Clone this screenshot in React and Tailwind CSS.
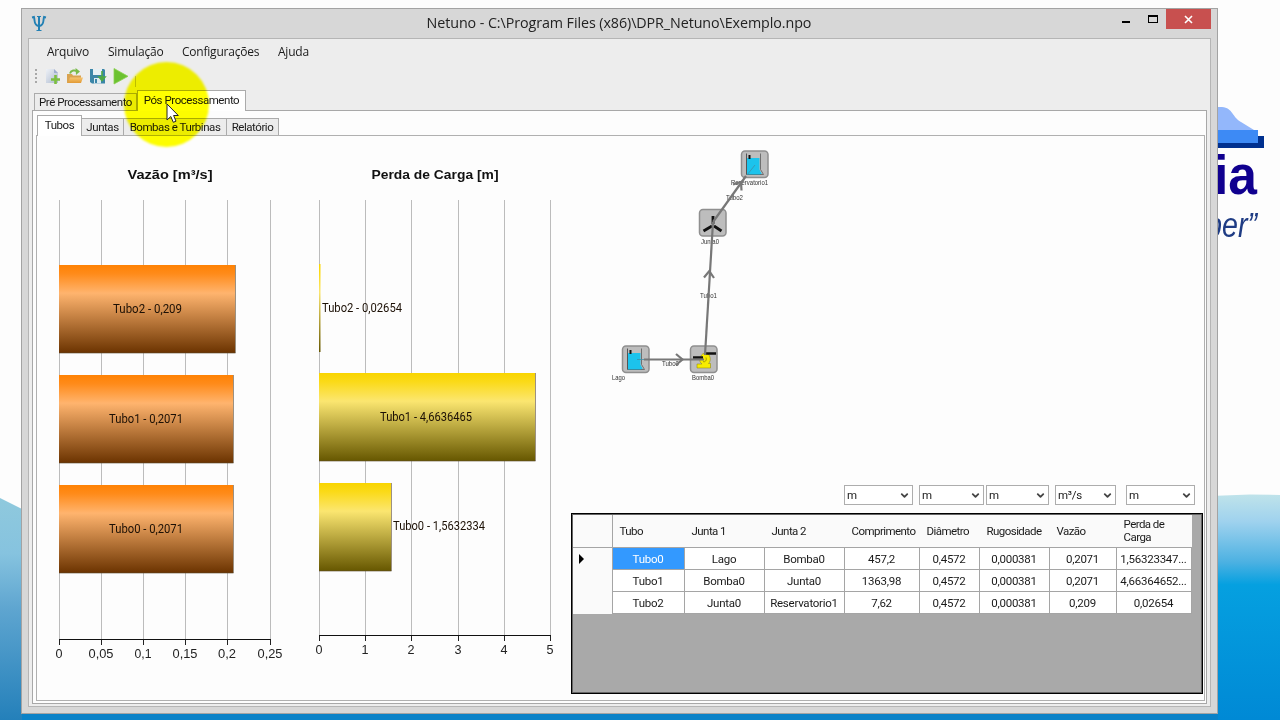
import { ChevronDown } from "lucide-react";

const menus = [
    { label: "Arquivo", width: "w-[61px]" },
    { label: "Simulação", width: "w-[74px]" },
    { label: "Configurações", width: "w-[96px]" },
    { label: "Ajuda", width: "w-[50px]" },
];

const flowChart = {
    title: "Vazão [m³/s]",
    titleX: 170,
    titleLength: 85,
    left: 37,
    width: 260,
    axisY: 639,
    labelY: 658,
    gradient: "orangeBar",
    ticks: [
        { x: 59, label: "0", length: 7 },
        { x: 101, label: "0,05", length: 25 },
        { x: 143, label: "0,1", length: 17 },
        { x: 185, label: "0,15", length: 25 },
        { x: 227, label: "0,2", length: 18 },
        { x: 270, label: "0,25", length: 25 },
    ],
    bars: [
        { y: 265, width: 176, label: "Tubo2 - 0,209", labelX: 113, length: 69, labelY: 313 },
        { y: 375, width: 174, label: "Tubo1 - 0,2071", labelX: 109, length: 74, labelY: 423 },
        { y: 485, width: 174, label: "Tubo0 - 0,2071", labelX: 109, length: 74, labelY: 533 },
    ],
};

const lossChart = {
    title: "Perda de Carga [m]",
    titleX: 435,
    titleLength: 127,
    left: 297,
    width: 274,
    axisY: 635,
    labelY: 654,
    gradient: "yellowBar",
    ticks: [
        { x: 319, label: "0", length: 7 },
        { x: 365, label: "1", length: 7 },
        { x: 411, label: "2", length: 7 },
        { x: 458, label: "3", length: 7 },
        { x: 504, label: "4", length: 7 },
        { x: 550, label: "5", length: 7 },
    ],
    bars: [
        { y: 264, width: 1.5, label: "Tubo2 - 0,02654", labelX: 322, length: 80, labelY: 312 },
        { y: 373, width: 216, label: "Tubo1 - 4,6636465", labelX: 380, length: 92, labelY: 421 },
        { y: 483, width: 72, label: "Tubo0 - 1,5632334", labelX: 393, length: 92, labelY: 530 },
    ],
};

const units = [
    { label: "m", style: "w-[69px]" },
    { label: "m", style: "w-[65px] ml-[6px]" },
    { label: "m", style: "w-[63px] ml-[2px]" },
    { label: "m³/s", style: "w-[61px] ml-[6px]" },
    { label: "m", style: "w-[69px] ml-[10px]" },
];

const columns = ["Tubo", "Junta 1", "Junta 2", "Comprimento", "Diâmetro", "Rugosidade", "Vazão", "Perda de Carga"];

const rows = [
    ["Tubo0", "Lago", "Bomba0", "457,2", "0,4572", "0,000381", "0,2071", "1,56323347..."],
    ["Tubo1", "Bomba0", "Junta0", "1363,98", "0,4572", "0,000381", "0,2071", "4,66364652..."],
    ["Tubo2", "Junta0", "Reservatorio1", "7,62", "0,4572", "0,000381", "0,209", "0,02654"],
];

function Wallpaper() {
    return (
        <svg className="absolute inset-0 tracking-normal" width="1280" height="720" viewBox="0 0 1280 720">
            <defs>
                <linearGradient id="waveLeft" x1="0" y1="0" x2="0" y2="1">
                    <stop offset="0" stopColor="#8fc9dd" />
                    <stop offset="0.25" stopColor="#86c3df" />
                    <stop offset="0.5" stopColor="#5ea5d0" />
                    <stop offset="1" stopColor="#2480ba" />
                </linearGradient>
                <linearGradient id="waveRight" x1="0" y1="0" x2="0" y2="1">
                    <stop offset="0" stopColor="#bfe3ea" />
                    <stop offset="0.12" stopColor="#9fd2ee" />
                    <stop offset="0.3" stopColor="#4cb1e2" />
                    <stop offset="0.4" stopColor="#05a0e0" />
                    <stop offset="1" stopColor="#0089d5" />
                </linearGradient>
            </defs>
            <rect width="1280" height="720" fill="#fdfdfd" />
            <path d="M0 498 L24 510 V720 H0Z" fill="url(#waveLeft)" />
            <path d="M1210 496 L1250 494.500 L1280 495 V720 H1210Z" fill="url(#waveRight)" />
            <rect x="22" y="712" width="1196" height="8" fill="#0a82c8" />
            <path d="M1210 136 H1264 V148 H1210Z" fill="#00308f" />
            <path d="M1210 130 H1258 V143 H1210Z" fill="#3d8af5" />
            <path d="M1210 107 H1222 C1233 108 1232 117 1241 122 L1254 130 H1210Z" fill="#93b7fb" />
            <text x="1257" y="194" textAnchor="end" textLength="43" lengthAdjust="spacingAndGlyphs" fontFamily="Liberation Sans, sans-serif" fontSize="55" fontWeight="700" fill="#10008f">ia</text>
            <text x="1257" y="237" textAnchor="end" textLength="51" lengthAdjust="spacingAndGlyphs" fontFamily="Liberation Sans, sans-serif" fontSize="35" fontStyle="italic" fill="#1f3c84">ber”</text>
        </svg>
    );
}

function TitleBar() {
    return (
        <div className="flex h-[29px] shrink-0 items-start">
            <svg className="mt-[6px] ml-[9px]" width="16" height="17" viewBox="0 0 16 17" fill="none" stroke="#2380b4">
                <path d="M8 1 V16" strokeWidth="2" />
                <path d="M1 2.500 L3 2 C4 5 2.500 10.500 8 11 C13.500 10.500 12 5 13 2 L15 2.500" strokeWidth="1.900" />
                <path d="M6 1.500 H10 M5.500 15.500 H10.500" strokeWidth="1.200" />
            </svg>
            <div className="mt-[4px] flex-1 pl-[73px] text-center font-['Open_Sans',sans-serif] text-[14.3px] leading-5 tracking-[-0.08px] whitespace-nowrap text-[#222]">
                Netuno - C:\Program Files (x86)\DPR_Netuno\Exemplo.npo
            </div>
            <div className="mr-[6px] flex h-[21px]">
                <div className="flex w-[29px] items-start pt-[12px] pl-[4px]">
                    <div className="h-[2px] w-[8px] bg-black"></div>
                </div>
                <div className="w-[19px] pt-[6px] pl-px">
                    <div className="h-[8px] w-[10px] border border-t-2 border-black"></div>
                </div>
                <div className="flex h-[20px] w-[45px] items-center justify-center bg-[#c8504f]">
                    <svg width="9" height="9" viewBox="0 0 9 9" stroke="#fff" strokeWidth="1.600">
                        <path d="M1 1 L8 8 M8 1 L1 8" />
                    </svg>
                </div>
            </div>
        </div>
    );
}

function Toolbar() {
    return (
        <div className="flex h-[26px] items-start pt-[2px]">
            <svg width="110" height="22" viewBox="29 66 110 22">
                <defs>
                    <linearGradient id="page" x1="0" y1="0" x2="1" y2="1">
                        <stop offset="0" stopColor="#eef1f6" />
                        <stop offset="1" stopColor="#aebbd0" />
                    </linearGradient>
                    <linearGradient id="folder" x1="0" y1="0" x2="0" y2="1">
                        <stop offset="0" stopColor="#f6c470" />
                        <stop offset="1" stopColor="#e29a35" />
                    </linearGradient>
                </defs>
                <path d="M36 69 V84" stroke="#a8a8a8" strokeWidth="2" strokeDasharray="2 2" />
                <path d="M46 69 H54 L58 73 V83 H46Z" fill="url(#page)" />
                <path d="M54 69 V73 H58Z" fill="#9faed0" />
                <path d="M55.500 75 V84 M51 79.500 H60" stroke="#7cbf40" strokeWidth="2.600" />
                <path d="M67 83 V74 H72 L73 75.500 H81 V83Z" fill="#d9a350" />
                <path d="M68 83 L70 77.500 H83 L81 83Z" fill="url(#folder)" />
                <path d="M70 73.500 C71 70 75 70 77 71" stroke="#79bb4b" strokeWidth="2" fill="none" />
                <path d="M75.500 68 L80 71.500 L76 75Z" fill="#79bb4b" />
                <path d="M90 69 H104 L105 70 V83.500 H92 L90 82Z" fill="#3b86a8" />
                <rect x="93" y="69" width="9" height="6" fill="#e6f0f5" />
                <rect x="94" y="78" width="7" height="5.500" fill="#dceaf0" />
                <rect x="95" y="79" width="2" height="4" fill="#3b86a8" />
                <path d="M102 71 V79 M99 77 L102 80.500 L105 77Z" stroke="#4fa945" strokeWidth="1.600" fill="#4fa945" />
                <path d="M114 68.500 L128 76.300 L114 84Z" fill="#6cc230" stroke="#8ad050" strokeWidth="0.800" />
                <path d="M135.500 76 V87" stroke="#bdbdbd" />
            </svg>
        </div>
    );
}

function Tab({ label, className }) {
    return (
        <div className={`flex justify-center border border-b-0 border-[#ababab] tracking-[-0.45px] whitespace-nowrap ${className}`}>
            {label}
        </div>
    );
}

function Highlight() {
    return (
        <>
            <div className="pointer-events-none absolute top-[62px] left-[124px] z-10 h-[85px] w-[85px] rounded-full bg-[#ffff00] mix-blend-multiply blur-[1px]"></div>
            <svg className="absolute top-[103px] left-[166px] z-20" width="14" height="21" viewBox="0 0 14 21">
                <path d="M1 1 V17 L4.800 13.500 L7.300 19.300 L10 18.200 L7.600 12.500 H12.300Z" fill="#fff" stroke="#222" />
            </svg>
        </>
    );
}

function BarChart({ chart }) {
    const start = chart.ticks[0].x;
    const end = chart.ticks[chart.ticks.length - 1].x;
    return (
        <svg className="shrink-0 tracking-normal" width={chart.width} height="560" viewBox={`${chart.left} 136 ${chart.width} 560`} fontFamily="Roboto, sans-serif">
            <defs>
                <linearGradient id="orangeBar" x1="0" y1="0" x2="0" y2="1">
                    <stop offset="0" stopColor="#ff8204" />
                    <stop offset="0.1" stopColor="#ff8b1a" />
                    <stop offset="0.32" stopColor="#ffb46e" />
                    <stop offset="1" stopColor="#6b3300" />
                </linearGradient>
                <linearGradient id="yellowBar" x1="0" y1="0" x2="0" y2="1">
                    <stop offset="0" stopColor="#f9d500" />
                    <stop offset="0.1" stopColor="#fbda18" />
                    <stop offset="0.32" stopColor="#fbe670" />
                    <stop offset="1" stopColor="#665700" />
                </linearGradient>
            </defs>
            <text x={chart.titleX} y="179" textAnchor="middle" textLength={chart.titleLength} lengthAdjust="spacingAndGlyphs" fontFamily="Liberation Sans, sans-serif" fontSize="13.300" fontWeight="700" fill="#111">
                {chart.title}
            </text>
            {chart.ticks.map((tick) => (
                <g key={tick.label}>
                    <path d={`M${tick.x + 0.5} 200 V${chart.axisY}`} stroke="#bcbcbc" />
                    <path d={`M${tick.x + 0.5} ${chart.axisY} v6`} stroke="#222" />
                    <text x={tick.x} y={chart.labelY} textAnchor="middle" textLength={tick.length} lengthAdjust="spacingAndGlyphs" fontFamily="Liberation Sans, sans-serif" fontSize="13" fill="#222">
                        {tick.label}
                    </text>
                </g>
            ))}
            <path d={`M${start} ${chart.axisY + 0.5} H${end + 1}`} stroke="#111" />
            {chart.bars.map((bar) => (
                <g key={bar.label}>
                    <rect x={start} y={bar.y} width={bar.width} height="88" fill={`url(#${chart.gradient})`} />
                    {bar.width > 2 && (
                        <path d={`M${start} ${bar.y + 88} h${bar.width + 0.5} v-88`} fill="none" stroke="#5c4a30" strokeOpacity="0.6" />
                    )}
                    <text x={bar.labelX} y={bar.labelY} textLength={bar.length} lengthAdjust="spacingAndGlyphs" fontSize="12" fill="#1c1005">
                        {bar.label}
                    </text>
                </g>
            ))}
        </svg>
    );
}

function Node({ x, y, children }) {
    return (
        <g transform={`translate(${x} ${y})`}>
            <rect x="0.500" y="0.500" width="26.500" height="26.500" rx="3.500" fill="#bdbdbd" stroke="#8f8f8f" strokeWidth="1.500" />
            {children}
        </g>
    );
}

function Tank() {
    return (
        <>
            <path d="M5.500 3 V24 H19" fill="none" stroke="#555" strokeWidth="1" />
            <path d="M6 7.500 H18.500 V19 L21 24 H6Z" fill="#1cc3ec" />
            <path d="M19.500 3 V19 L22.500 24 H19" fill="none" stroke="#666" strokeWidth="0.900" />
            <path d="M8.500 4.500 V8.500" stroke="#111" strokeWidth="2" />
        </>
    );
}

function NodeLabel({ x, y, length, children }) {
    return (
        <text x={x} y={y} textLength={length} lengthAdjust="spacingAndGlyphs" fontSize="7.500" fill="#333">
            {children}
        </text>
    );
}

function Network() {
    return (
        <svg className="tracking-normal" width="632" height="349" viewBox="571 136 632 349" fontFamily="Liberation Sans, sans-serif">
            <Node x={741} y={150.5}><Tank /></Node>
            <Node x={622} y={345.5}><Tank /></Node>
            <Node x={699} y={209}>
                <path d="M14 7 V15 M13 17 L4.500 22 M15 17 L22.500 22" stroke="#111" strokeWidth="2.800" />
            </Node>
            <Node x={690} y={345.5}>
                <path d="M7 22.500 V18.500 H12 C10 17 9.500 15.500 10 14 C10.500 10 12 8 15 7.500 C20 7 22 15 18.500 18 H20.500 V22.500Z" fill="#f8ec00" stroke="#8a8200" strokeWidth="0.500" />
                <path d="M13 16 C15 17 17 15 16 12" fill="none" stroke="#8a8200" strokeWidth="0.800" />
                <path d="M3 12 H13 M16 8 H26" stroke="#111" strokeWidth="2.400" />
            </Node>
            <NodeLabel x={731} y={185} length={37}>Reservatorio1</NodeLabel>
            <NodeLabel x={726} y={200} length={17}>Tubo2</NodeLabel>
            <NodeLabel x={701} y={243.5} length={18}>Junta0</NodeLabel>
            <NodeLabel x={700} y={297.5} length={17}>Tubo1</NodeLabel>
            <NodeLabel x={662} y={365.5} length={17}>Tubo0</NodeLabel>
            <NodeLabel x={612} y={380} length={13}>Lago</NodeLabel>
            <NodeLabel x={692} y={380} length={22}>Bomba0</NodeLabel>
            <g fill="none" stroke="#777" strokeWidth="2.200">
                <path d="M644 359.500 H704" />
                <path d="M705 355 L713 222" />
                <path d="M713 222 L746 176" />
                <path d="M676 354 L682.500 359.500 L676 365" />
                <path d="M704 277.500 L709.300 271 L714 278" />
                <path d="M733 184.500 L741 182 L741.500 190.500" />
            </g>
            <path d="M637 359.500 H644 M747 175 L755 165" stroke="#3f8fa8" strokeWidth="0.800" />
        </svg>
    );
}

function UnitSelectors() {
    return (
        <div className="flex h-[20px] pl-[273px]">
            {units.map((unit, index) => (
                <div key={index} className={`flex shrink-0 items-center justify-between border border-[#adadad] bg-white pr-[2px] pl-[2px] ${unit.style}`}>
                    <span>{unit.label}</span>
                    <ChevronDown size={11} strokeWidth={4} color="#444" />
                </div>
            ))}
        </div>
    );
}

function ResultsTable() {
    return (
        <div className="mt-[8px] h-[181px] w-[632px] border border-black bg-[#a9a9a9] outline outline-1 -outline-offset-2 outline-black/40">
            <table className="mt-px ml-px w-[619px] table-fixed border-separate border-spacing-0 bg-white">
                <colgroup>
                    <col className="w-[40px]" />
                    <col className="w-[72px]" />
                    <col className="w-[80px]" />
                    <col className="w-[80px]" />
                    <col className="w-[75px]" />
                    <col className="w-[60px]" />
                    <col className="w-[70px]" />
                    <col className="w-[67px]" />
                    <col className="w-[75px]" />
                </colgroup>
                <thead>
                <tr className="h-[33px] bg-[#fafafa]">
                    <th className="border-r border-b border-[#a5a5a5] p-0"></th>
                    {columns.map((column) => (
                        <th key={column} className="border-b border-[#a5a5a5] py-0 pr-0 pl-[6.5px] text-left leading-[13px] font-normal tracking-[-0.55px] last:pr-4">
                            {column}
                        </th>
                    ))}
                </tr>
                </thead>
                <tbody>
                {rows.map((row, rowIndex) => (
                    <tr key={row[0]} className="h-[22px]">
                        <td className="border-r border-[#a5a5a5] bg-[#fafafa] p-0">
                            {rowIndex === 0 && (
                                <div className="ml-[6px] h-0 w-0 border-y-[5px] border-l-[5px] border-y-transparent border-l-black"></div>
                            )}
                        </td>
                        {row.map((value, index) => (
                            <td
                                key={index}
                                className={`border-r border-b border-[#a5a5a5] py-0 pr-px pl-0 text-center whitespace-nowrap ${rowIndex === 0 && index === 0 ? "bg-[#3399ff] text-white" : ""}`}
                            >
                                {value}
                            </td>
                        ))}
                    </tr>
                ))}
                </tbody>
            </table>
        </div>
    );
}

export default function App() {
    return (
        <div className="relative h-[720px] w-[1280px] overflow-hidden pt-[8px] pl-[21px] font-['Roboto','Liberation_Sans',sans-serif] text-[11.5px] leading-[14px] tracking-[-0.25px] text-[#1a1a1a]">
            <Wallpaper />
            <div className="relative flex h-[706px] w-[1197px] flex-col border border-[#a3a3a3] bg-[#d7d7d7]">
                <TitleBar />
                <div className="mx-[6px] h-[669px] border border-[#b5b5b5] bg-[#ededed]">
                    <div className="flex h-[25px] items-center pl-[18px] font-['Open_Sans',sans-serif] text-[12px] tracking-[-0.22px]">
                        {menus.map((menu) => (
                            <div key={menu.label} className={`shrink-0 whitespace-nowrap ${menu.width}`}>{menu.label}</div>
                        ))}
                    </div>
                    <Toolbar />
                    <div className="flex h-[20px] items-end pl-[5px]">
                        <Tab label="Pré Processamento" className="h-[17px] w-[103px] bg-[#ececec] pt-px" />
                        <Tab label="Pós Processamento" className="relative -mb-px h-[21px] w-[109px] bg-white pt-[2px]" />
                    </div>
                    <div className="ml-[3px] h-[594px] w-[1175px] border border-[#a8a8a8] bg-[#fdfdfd]">
                        <div className="flex h-[24px] items-end pl-[4px]">
                            <Tab label="Tubos" className="relative -mb-px h-[21px] w-[45px] bg-white pt-[2px]" />
                            <Tab label="Juntas" className="h-[17px] w-[42px] border-l-0 bg-[#ececec] pt-px" />
                            <Tab label="Bombas e Turbinas" className="h-[17px] w-[103px] border-l-0 bg-[#ececec] pt-px" />
                            <Tab label="Relatório" className="h-[17px] w-[52px] border-l-0 bg-[#ececec] pt-px" />
                        </div>
                        <div className="ml-[3px] flex h-[566px] w-[1169px] border border-[#b0b0b0] bg-[#fdfdfd]">
                            <BarChart chart={flowChart} />
                            <BarChart chart={lossChart} />
                            <div className="flex flex-col">
                                <Network />
                                <UnitSelectors />
                                <ResultsTable />
                            </div>
                        </div>
                    </div>
                </div>
            </div>
            <Highlight />
        </div>
    );
}
